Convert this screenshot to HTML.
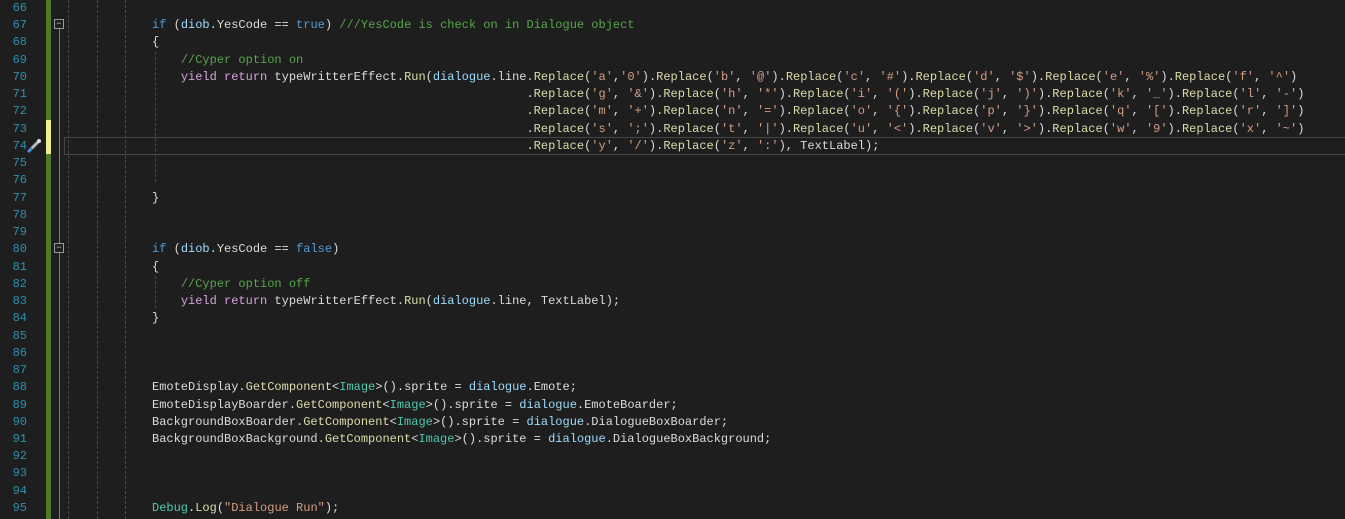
<!DOCTYPE html>
<html><head><style>
body{margin:0;background:#1e1e1e;width:1345px;height:519px;overflow:hidden;position:relative;font-family:"Liberation Mono",monospace;font-size:12px}
.ln{position:absolute;left:0;width:27px;text-align:right;color:#2b91af}
.c{position:absolute;left:152px;white-space:pre;color:#dcdcdc}
.k{color:#569cd6}.y{color:#d8a0df}.v{color:#9cdcfe}.m{color:#dcdcaa}.s{color:#d69d85}.g{color:#57a64a}.t{color:#4ec9b0}
.gd{position:absolute;border-left:1px dashed #4a4a4a;width:0}
</style></head><body>
<div style="position:absolute;left:46px;top:0;width:5px;height:519px;background:#4f7a29"></div>
<div style="position:absolute;left:46px;top:120px;width:5px;height:34px;background:#efef8f"></div>
<div style="position:absolute;left:59px;top:28px;width:1px;height:491px;background:#7a7a7a"></div>
<div style="position:absolute;left:54px;top:19px;width:8px;height:8px;border:1px solid #999;background:#1e1e1e;color:#ccc;font-size:9px;line-height:8px;text-align:center">−</div>
<div style="position:absolute;left:54px;top:243px;width:8px;height:8px;border:1px solid #999;background:#1e1e1e;color:#ccc;font-size:9px;line-height:8px;text-align:center">−</div>
<div class="gd" style="left:68px;top:0;height:519px"></div>
<div class="gd" style="left:97px;top:0;height:519px"></div>
<div class="gd" style="left:125px;top:0;height:519px"></div>
<div class="gd" style="left:155px;top:52px;height:130px"></div>
<div class="gd" style="left:155px;top:276px;height:32px"></div>
<div style="position:absolute;left:64px;top:137px;width:1290px;height:16px;border:1px solid #464646"></div>
<svg style="position:absolute;left:25px;top:137px" width="18" height="18" viewBox="0 0 18 18"><path d="M3 15 L8 10" stroke="#4a8fd6" stroke-width="3"/><path d="M7 11 L14 4" stroke="#bbb" stroke-width="3"/><circle cx="14" cy="4" r="2" fill="#ddd"/></svg>
<div id="g"></div>
<script>
const L=[
'',
'<span class="k">if</span> (<span class="v">diob</span>.YesCode == <span class="k">true</span>) <span class="g">///YesCode is check on in Dialogue object</span>',
'{',
'    <span class="g">//Cyper option on</span>',
'    <span class="y">yield return</span> typeWritterEffect.<span class="m">Run</span>(<span class="v">dialogue</span>.line.<span class="m">Replace</span>(<span class="s">\'a\'</span>,<span class="s">\'0\'</span>).<span class="m">Replace</span>(<span class="s">\'b\'</span>, <span class="s">\'@\'</span>).<span class="m">Replace</span>(<span class="s">\'c\'</span>, <span class="s">\'#\'</span>).<span class="m">Replace</span>(<span class="s">\'d\'</span>, <span class="s">\'$\'</span>).<span class="m">Replace</span>(<span class="s">\'e\'</span>, <span class="s">\'%\'</span>).<span class="m">Replace</span>(<span class="s">\'f\'</span>, <span class="s">\'^\'</span>)',
'R:g&amp;h*i(j)k_l-',
'R:m+n=o{p}q[r]',
'R:s;t|u&lt;v&gt;w9x~',
'Z',
'','',
'}',
'','',
'<span class="k">if</span> (<span class="v">diob</span>.YesCode == <span class="k">false</span>)',
'{',
'    <span class="g">//Cyper option off</span>',
'    <span class="y">yield return</span> typeWritterEffect.<span class="m">Run</span>(<span class="v">dialogue</span>.line, TextLabel);',
'}',
'','','',
'EmoteDisplay.<span class="m">GetComponent</span>&lt;<span class="t">Image</span>&gt;().sprite = <span class="v">dialogue</span>.Emote;',
'EmoteDisplayBoarder.<span class="m">GetComponent</span>&lt;<span class="t">Image</span>&gt;().sprite = <span class="v">dialogue</span>.EmoteBoarder;',
'BackgroundBoxBoarder.<span class="m">GetComponent</span>&lt;<span class="t">Image</span>&gt;().sprite = <span class="v">dialogue</span>.DialogueBoxBoarder;',
'BackgroundBoxBackground.<span class="m">GetComponent</span>&lt;<span class="t">Image</span>&gt;().sprite = <span class="v">dialogue</span>.DialogueBoxBackground;',
'','','',
'<span class="t">Debug</span>.<span class="m">Log</span>(<span class="s">"Dialogue Run"</span>);'
];
function rp(a,b){return '.<span class="m">Replace</span>(<span class="s">\''+a+'\'</span>, <span class="s">\''+b+'\'</span>)';}
const pad=' '.repeat(52);
let h='';
L.forEach((s,i)=>{
 if(s.startsWith('R:')){
  const q=s.slice(2).match(/(&[a-z]+;|.)/g);let o='';
  for(let j=0;j<q.length;j+=2)o+=rp(q[j],q[j+1]);
  s=pad+o;
 } else if(s==='Z'){s=pad+rp('y','/')+rp('z',':')+', TextLabel);';}
 const top=1+i*17.24;
 h+='<div class="ln" style="top:'+top+'px">'+(66+i)+'</div><div class="c" style="top:'+top+'px">'+s+'</div>';
});
document.getElementById('g').innerHTML=h;
</script>
</body></html>
